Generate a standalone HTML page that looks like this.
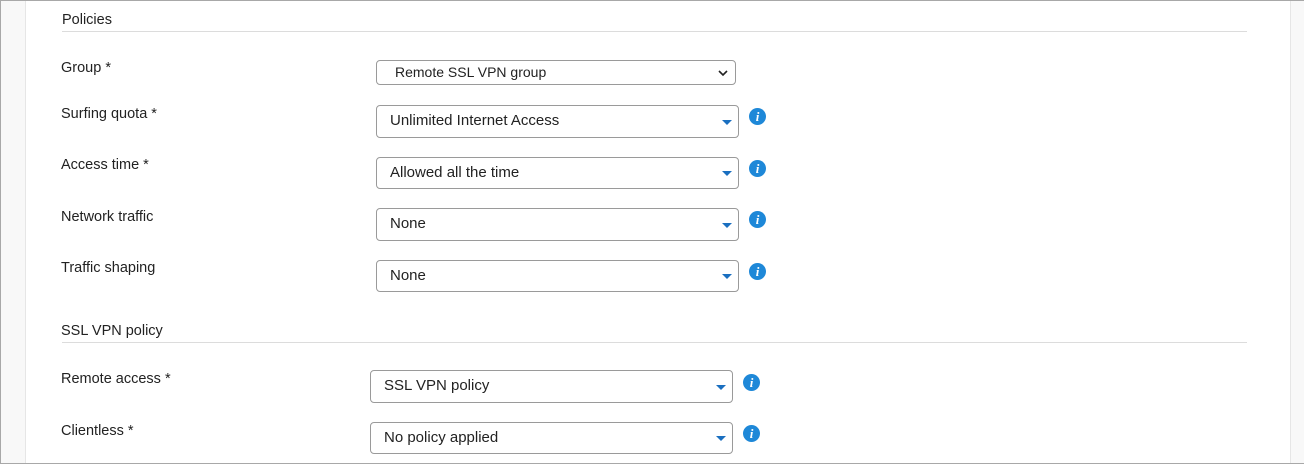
<!DOCTYPE html>
<html><head><style>
body{margin:0;width:1304px;height:464px;overflow:hidden;background:#fff;font-family:"Liberation Sans",sans-serif;color:#222;position:relative}
.frame{position:absolute;left:0;top:0;width:1302px;height:462px;border:1px solid #a8a8a8}
.ls{position:absolute;left:1px;top:1px;width:24px;height:462px;background:#f8f8f8;border-right:1px solid #e6e6e6}
.rs{position:absolute;left:1290px;top:1px;width:13px;height:462px;background:#f8f8f8;border-left:1px solid #e6e6e6}
.t{position:absolute;font-size:14.5px;line-height:16px}
.hr{position:absolute;height:1px;background:#dcdcdc}
.sel{position:absolute;border:1px solid #9a9a9a;border-radius:4px;box-sizing:border-box;font-size:15px;padding-left:13px;padding-bottom:2px;display:flex;align-items:center}
.sel .ar{position:absolute;right:6px;top:50%;margin-top:-2px;width:0;height:0;border-left:5px solid transparent;border-right:5px solid transparent;border-top:5px solid #1a6fc0}
.i{position:absolute;width:17px;height:17px;border-radius:50%;background:#1e88d8;color:#fff;font:italic bold 13px "Liberation Serif",serif;text-align:center;line-height:17px}
</style></head><body>
<div class="frame"></div><div class="ls"></div><div class="rs"></div>
<div class="t" style="left:62px;top:12px">Policies</div>
<div class="hr" style="left:62px;top:31px;width:1185px"></div>
<div class="t" style="left:61px;top:60px">Group *</div>
<div class="sel" style="left:376px;top:60px;width:360px;height:25px;font-size:14px;padding-left:18px">Remote SSL VPN group<svg style="position:absolute;right:7px;top:9px" width="10" height="7" viewBox="0 0 10 7"><path d="M1 1L5 5L9 1" stroke="#222" stroke-width="1.6" fill="none"/></svg></div>

<div class="t" style="left:61px;top:106px">Surfing quota *</div>
<div class="sel" style="left:376px;top:105px;width:363px;height:33px">Unlimited Internet Access<span class="ar"></span></div>
<div class="i" style="left:749px;top:108px">i</div>

<div class="t" style="left:61px;top:157px">Access time *</div>
<div class="sel" style="left:376px;top:157px;width:363px;height:32px">Allowed all the time<span class="ar"></span></div>
<div class="i" style="left:749px;top:160px">i</div>

<div class="t" style="left:61px;top:209px">Network traffic</div>
<div class="sel" style="left:376px;top:208px;width:363px;height:33px">None<span class="ar"></span></div>
<div class="i" style="left:749px;top:211px">i</div>

<div class="t" style="left:61px;top:260px">Traffic shaping</div>
<div class="sel" style="left:376px;top:260px;width:363px;height:32px">None<span class="ar"></span></div>
<div class="i" style="left:749px;top:263px">i</div>

<div class="t" style="left:61px;top:323px">SSL VPN policy</div>
<div class="hr" style="left:62px;top:342px;width:1185px"></div>

<div class="t" style="left:61px;top:371px">Remote access *</div>
<div class="sel" style="left:370px;top:370px;width:363px;height:33px">SSL VPN policy<span class="ar"></span></div>
<div class="i" style="left:743px;top:374px">i</div>

<div class="t" style="left:61px;top:423px">Clientless *</div>
<div class="sel" style="left:370px;top:422px;width:363px;height:32px">No policy applied<span class="ar"></span></div>
<div class="i" style="left:743px;top:425px">i</div>
</body></html>
